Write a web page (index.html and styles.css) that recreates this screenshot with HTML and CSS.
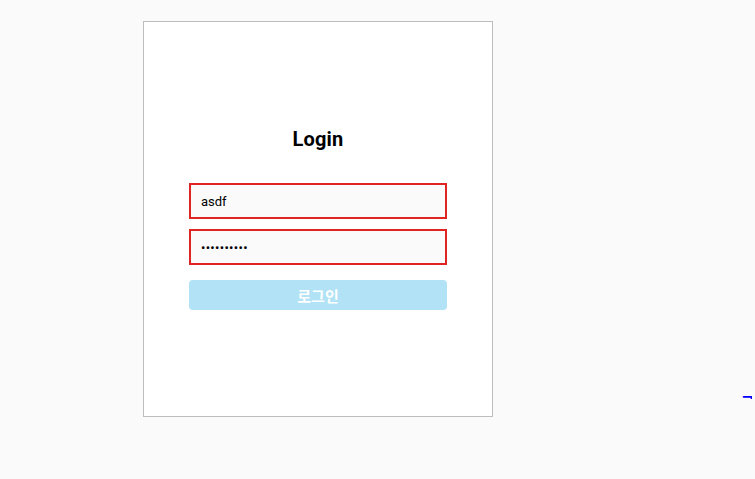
FILE: index.html
```html
<!DOCTYPE html>
<html lang="ko">
<head>
<meta charset="utf-8">
<title>Login</title>
<link rel="stylesheet" href="styles.css">
</head>
<body>
<div class="card">
  <h1 class="title">Login</h1>
  <form class="form">
    <input class="field" type="text" value="asdf">
    <input class="field field-pass" type="password" value="asdfasdfas">
    <button class="submit" type="button">로그인</button>
  </form>
</div>
<div class="stray-clip"><a class="stray-link" href="#">ㄱ</a></div>
</body>
</html>
```
FILE: styles.css
```css
html, body {
  margin: 0;
  padding: 0;
  overflow: hidden;
}
body {
  background: #fafafa;
  width: 755px;
  height: 479px;
  position: relative;
  font-family: Roboto, "Noto Sans CJK KR", sans-serif;
}
.card {
  box-sizing: border-box;
  width: 350px;
  height: 396px;
  margin: 21px 0 0 143px;
  background: #fff;
  border: 1px solid #bdbdbd;
  padding: 105px 45px 0 45px;
}
.title {
  margin: 0 0 32px 0;
  text-align: center;
  font-size: 20px;
  line-height: 24px;
  font-weight: 700;
  letter-spacing: 0.2px;
  color: #000;
}
.form {
  display: flex;
  flex-direction: column;
}
.field {
  box-sizing: border-box;
  width: 258px;
  height: 36px;
  margin: 0 0 10px 0;
  border: 2px solid #e02424;
  background: #fafafa;
  padding: 0 10px;
  font-family: Roboto, "Noto Sans CJK KR", sans-serif;
  font-size: 13px;
  color: #000;
  outline: none;
}
.field-pass {
  margin-bottom: 15px;
  letter-spacing: 0.3px;
}
.submit {
  box-sizing: border-box;
  width: 258px;
  height: 30px;
  border: none;
  border-radius: 4px;
  background: #b1e2f5;
  color: #fff;
  font-family: "Noto Sans CJK KR", sans-serif;
  font-size: 15px;
  font-weight: 700;
  padding: 0;
}
.stray-clip {
  position: absolute;
  left: 740px;
  top: 393px;
  width: 12px;
  height: 6px;
  overflow: hidden;
}
.stray-link {
  display: block;
  margin-top: -2px;
  color: #0000ff;
  font-family: "Noto Sans CJK KR", sans-serif;
  font-size: 17px;
  line-height: 17px;
  font-weight: 700;
  text-decoration: none;
  white-space: nowrap;
}
```
